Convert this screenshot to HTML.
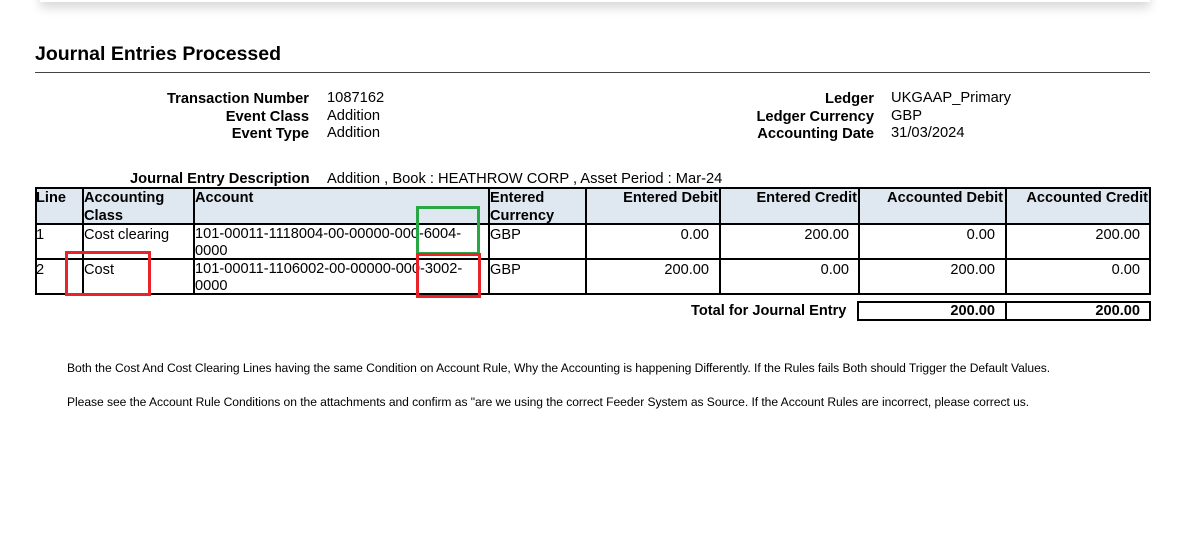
<!DOCTYPE html>
<html><head><meta charset="utf-8"><style>
body{margin:0;width:1190px;height:535px;background:#fff;position:relative;overflow:hidden;font-family:"Liberation Sans",Arial,sans-serif;color:#000}
.a{position:absolute;white-space:nowrap}
.b{font-weight:bold}
.l{font-size:14.7px}
.r{text-align:right}
.h{position:absolute;background:#000}
.cell{position:absolute;font-size:14.6px;line-height:18px;white-space:nowrap}
</style></head><body>
<div class="a" style="left:40px;top:-20px;width:1110px;height:22px;box-shadow:0 6px 10px rgba(0,0,0,.15);background:#fff"></div>
<div class="a b" style="left:35px;top:43px;font-size:19.5px">Journal Entries Processed</div>
<div class="h" style="left:35px;top:72px;width:1115px;height:1px;background:#444"></div>

<div class="a b l r" style="left:100px;width:209px;top:91px;line-height:17.5px">Transaction Number<br>Event Class<br>Event Type</div>
<div class="a l" style="left:327px;top:90px;line-height:17.5px">1087162<br>Addition<br>Addition</div>
<div class="a b l r" style="left:700px;width:174px;top:91px;line-height:17.5px">Ledger<br>Ledger Currency<br>Accounting Date</div>
<div class="a l" style="left:891px;top:90px;line-height:17.5px">UKGAAP_Primary<br>GBP<br>31/03/2024</div>

<div class="a b l" style="left:130px;top:171px">Journal Entry Description</div>
<div class="a l" style="left:327px;top:171px">Addition , Book : HEATHROW CORP , Asset Period : Mar-24</div>

<div class="a" style="left:35px;top:188px;width:1115px;height:36px;background:#dfe8f1"></div>
<div class="h" style="left:35px;top:187px;width:1116px;height:2px"></div>
<div class="h" style="left:35px;top:223px;width:1116px;height:2px"></div>
<div class="h" style="left:35px;top:258px;width:1116px;height:2px"></div>
<div class="h" style="left:35px;top:293px;width:1116px;height:2px"></div>
<div class="h" style="left:35px;top:187px;width:2px;height:108px"></div>
<div class="h" style="left:82px;top:187px;width:2px;height:108px"></div>
<div class="h" style="left:193px;top:187px;width:2px;height:108px"></div>
<div class="h" style="left:488px;top:187px;width:2px;height:108px"></div>
<div class="h" style="left:585px;top:187px;width:2px;height:108px"></div>
<div class="h" style="left:719px;top:187px;width:2px;height:108px"></div>
<div class="h" style="left:858px;top:187px;width:2px;height:108px"></div>
<div class="h" style="left:1005px;top:187px;width:2px;height:108px"></div>
<div class="h" style="left:1149px;top:187px;width:2px;height:108px"></div>

<div class="cell b" style="left:36px;top:189px">Line</div>
<div class="cell b" style="left:84px;top:189px">Accounting<br>Class</div>
<div class="cell b" style="left:195px;top:189px">Account</div>
<div class="cell b" style="left:490px;top:189px">Entered<br>Currency</div>
<div class="cell b r" style="left:587px;width:131px;top:189px">Entered Debit</div>
<div class="cell b r" style="left:721px;width:136px;top:189px">Entered Credit</div>
<div class="cell b r" style="left:860px;width:143px;top:189px">Accounted Debit</div>
<div class="cell b r" style="left:1007px;width:141px;top:189px">Accounted Credit</div>

<div class="cell" style="left:36px;top:226px">1</div>
<div class="cell" style="left:84px;top:226px">Cost clearing</div>
<div class="cell" style="left:195px;top:226px;line-height:17px">101-00011-1118004-00-00000-000-6004-<br>0000</div>
<div class="cell" style="left:490px;top:226px">GBP</div>
<div class="cell r" style="left:587px;width:122px;top:226px">0.00</div>
<div class="cell r" style="left:721px;width:128px;top:226px">200.00</div>
<div class="cell r" style="left:860px;width:135px;top:226px">0.00</div>
<div class="cell r" style="left:1007px;width:133px;top:226px">200.00</div>

<div class="cell" style="left:36px;top:261px">2</div>
<div class="cell" style="left:84px;top:261px">Cost</div>
<div class="cell" style="left:195px;top:261px;line-height:17px">101-00011-1106002-00-00000-000-3002-<br>0000</div>
<div class="cell" style="left:490px;top:261px">GBP</div>
<div class="cell r" style="left:587px;width:122px;top:261px">200.00</div>
<div class="cell r" style="left:721px;width:128px;top:261px">0.00</div>
<div class="cell r" style="left:860px;width:135px;top:261px">200.00</div>
<div class="cell r" style="left:1007px;width:133px;top:261px">0.00</div>

<div class="cell b" style="left:691px;top:302px">Total for Journal Entry</div>
<div class="a" style="left:857px;top:301px;width:290px;height:16px;border:2px solid #000"></div>
<div class="h" style="left:1005px;top:301px;width:2px;height:19px"></div>
<div class="cell b r" style="left:860px;width:135px;top:302px">200.00</div>
<div class="cell b r" style="left:1007px;width:133px;top:302px">200.00</div>

<div class="a" style="left:65px;top:251px;width:80px;height:39px;border:3px solid #e8232a"></div>
<div class="a" style="left:416px;top:206px;width:58px;height:43px;border:3px solid #28a745"></div>
<div class="a" style="left:416px;top:253px;width:59px;height:39px;border:3px solid #e8232a"></div>

<div class="a" style="left:67px;top:361px;font-size:12.1px;letter-spacing:-0.05px">Both the Cost And Cost Clearing Lines having the same Condition on Account Rule, Why the Accounting is happening Differently. If the Rules fails Both should Trigger the Default Values.</div>
<div class="a" style="left:67px;top:395px;font-size:12.1px;letter-spacing:-0.05px">Please see the Account Rule Conditions on the attachments and confirm as "are we using the correct Feeder System as Source. If the Account Rules are incorrect, please correct us.</div>
</body></html>
